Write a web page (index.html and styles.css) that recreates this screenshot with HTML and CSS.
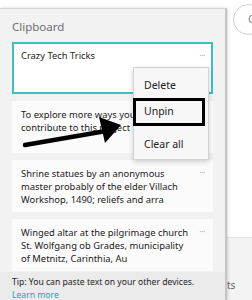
FILE: index.html
```html
<!DOCTYPE html>
<html>
<head>
<meta charset="utf-8">
<link rel="stylesheet" href="styles.css">
</head>
<body>
<div class="stage">
  <div class="panel">
    <div class="title">Clipboard</div>
    <div class="list">
      <div class="card selected">
        <div class="text">Crazy Tech Tricks</div>
        <div class="more">···</div>
      </div>
      <div class="card">
        <div class="text">To explore more ways you can<br>contribute to this project</div>
        <div class="more">···</div>
      </div>
      <div class="card">
        <div class="text">Shrine statues by an anonymous<br>master probably of the elder Villach<br>Workshop, 1490; reliefs and arra</div>
        <div class="more">···</div>
      </div>
      <div class="card">
        <div class="text">Winged altar at the pilgrimage church<br>St. Wolfgang ob Grades, municipality<br>of Metnitz, Carinthia, Au</div>
        <div class="more">···</div>
      </div>
    </div>
    <div class="tip">
      <div class="tip-line">Tip: You can paste text on your other devices.</div>
      <div class="tip-line learn">Learn more</div>
    </div>
  </div>
  <div class="side">
    <div class="side-top"></div>
    <div class="side-bottom"><span class="side-text">ts</span></div>
  </div>

  <div class="circle"><span>C</span></div>

  <div class="menu">
    <div class="item">Delete</div>
    <div class="item">Unpin</div>
    <div class="sep"></div>
    <div class="item">Clear all</div>
  </div>
  <div class="highlight"></div>

  <svg class="arrow" width="252" height="300" viewBox="0 0 252 300">
    <line x1="25" y1="145" x2="106" y2="131" stroke="#000" stroke-width="4.5" stroke-linecap="round"/>
    <polygon points="121,125 99,117 105,143" fill="#000"/>
  </svg>
</div>
</body>
</html>
```

FILE: styles.css
```css
* { box-sizing: border-box; }
html, body { margin: 0; padding: 0; }
body {
  background: #ffffff;
  font-family: "Noto Sans", "Open Sans", sans-serif;
  color: #1f1f1f;
}
.stage {
  position: relative;
  width: 252px;
  height: 300px;
  overflow: hidden;
  display: flex;
}
.panel {
  margin-top: 8px;
  width: 227px;
  height: 292px;
  background: #f2f2f2;
  border-top: 1px solid #d6d6d6;
  border-right: 2px solid #c4c4c4;
  box-shadow: 1px 0 3px rgba(0,0,0,0.15);
  display: flex;
  flex-direction: column;
  flex-shrink: 0;
  position: relative;
  z-index: 1;
  overflow: hidden;
}
.title {
  height: 33px;
  padding: 10px 0 0 12px;
  font-size: 11.5px;
  color: #707070;
  line-height: 16px;
}
.list {
  display: flex;
  flex-direction: column;
  gap: 7px;
  padding: 0 12px 0 12px;
}
.card {
  position: relative;
  height: 52px;
  background: #fbfbfb;
  padding: 7px 9px;
  font-size: 9.4px;
  line-height: 13px;
  color: #222;
  white-space: nowrap;
  overflow: hidden;
}
.card.selected {
  border: 2px solid #3fbfc0;
  background: #ffffff;
  padding: 5px 7px;
}
.more {
  position: absolute;
  right: 8px;
  top: 6px;
  font-size: 9px;
  line-height: 13px;
  color: #b8b8b8;
  letter-spacing: -0.5px;
}
.card.selected .more { right: 6px; top: 5px; }
.tip {
  margin-top: auto;
  height: 28px;
  background: #ebebeb;
  padding: 4px 0 0 12px;
}
.tip-line {
  font-size: 8.6px;
  line-height: 13px;
  color: #222;
  white-space: nowrap;
}
.learn {
  color: #1aa3b0;
}
.side {
  flex: 1;
  display: flex;
  flex-direction: column;
}
.side-top {
  height: 237px;
  background: #ffffff;
}
.side-bottom {
  flex: 1;
  background: #f3f3f3;
  border-top: 1px solid #e4e4e4;
  padding: 41px 0 0 0;
  font-size: 10px;
  line-height: 13px;
  color: #666;
}
.circle {
  position: absolute;
  left: 233px;
  top: 4px;
  width: 31px;
  height: 31px;
  border-radius: 50%;
  border: 1px solid #cfcfcf;
  background: #fff;
  font-size: 11px;
  color: #888;
  padding: 7px 0 0 14px;
  line-height: 14px;
}
.menu {
  position: absolute;
  left: 133px;
  top: 67px;
  width: 76px;
  height: 93px;
  background: #f7f7f7;
  border: 1px solid #d2d2d2;
  box-shadow: 0 2px 5px rgba(0,0,0,0.18);
  padding: 4px 0;
  z-index: 3;
}
.item {
  height: 26px;
  line-height: 26px;
  padding-left: 10px;
  font-size: 10.5px;
  color: #222;
}
.sep { height: 7px; }
.highlight {
  position: absolute;
  left: 133px;
  top: 98px;
  width: 72px;
  height: 28px;
  border: 3px solid #000;
  z-index: 4;
}
.arrow {
  position: absolute;
  left: 0;
  top: 0;
  z-index: 5;
}
```
